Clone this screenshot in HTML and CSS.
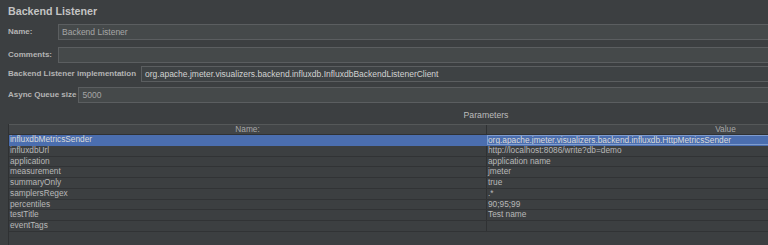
FILE: index.html
```html
<!DOCTYPE html>
<html>
<head>
<meta charset="utf-8">
<link rel="stylesheet" href="styles.css">
</head>
<body>
<div class="panel">
  <h1 class="title">Backend Listener</h1>
  <div class="form">
    <span class="lbl">Name:</span><div class="field dim">Backend Listener</div>
    <span class="lbl">Comments:</span><div class="field"></div>
  </div>
  <div class="row impl">
    <span class="lbl">Backend Listener implementation</span>
    <div class="field combo">org.apache.jmeter.visualizers.backend.influxdb.InfluxdbBackendListenerClient</div>
  </div>
  <div class="row queue">
    <span class="lbl">Async Queue size</span>
    <div class="field dim">5000</div>
  </div>
  <div class="params-title">Parameters</div>
  <div class="table">
    <div class="thead"><div class="th name">Name:</div><div class="th">Value</div></div>
    <div class="tr selected"><div class="td name">influxdbMetricsSender</div><div class="td val focus">org.apache.jmeter.visualizers.backend.influxdb.HttpMetricsSender</div></div>
    <div class="tr"><div class="td name">influxdbUrl</div><div class="td val">http://localhost:8086/write?db=demo</div></div>
    <div class="tr"><div class="td name">application</div><div class="td val">application name</div></div>
    <div class="tr"><div class="td name">measurement</div><div class="td val">jmeter</div></div>
    <div class="tr"><div class="td name">summaryOnly</div><div class="td val">true</div></div>
    <div class="tr"><div class="td name">samplersRegex</div><div class="td val">.*</div></div>
    <div class="tr"><div class="td name">percentiles</div><div class="td val">90;95;99</div></div>
    <div class="tr"><div class="td name">testTitle</div><div class="td val">Test name</div></div>
    <div class="tr"><div class="td name">eventTags</div><div class="td val"></div></div>
  </div>
</div>
</body>
</html>
```
FILE: styles.css
```css
* { box-sizing: border-box; }
html, body {
  margin: 0;
  padding: 0;
  background: #3c3f41;
  overflow: hidden;
  width: 768px;
  height: 245px;
}
.panel {
  width: 972px;
  padding: 4px 8px 0 8px;
  font-family: "Liberation Sans", Arial, sans-serif;
  color: #bbbbbb;
}
.title {
  margin: 0;
  font-size: 10.7px;
  line-height: 14px;
  font-weight: bold;
  color: #c4c4c4;
}
.lbl {
  font-size: 8px;
  font-weight: bold;
  line-height: 16px;
  color: #b4b4b4;
  white-space: nowrap;
}
.form {
  margin-top: 6px;
  display: grid;
  grid-template-columns: 50px 1fr;
  row-gap: 7px;
}
.field {
  height: 16px;
  border: 1px solid #5b5e60;
  background: #45494a;
  font-size: 8.5px;
  line-height: 14px;
  padding-left: 3px;
  color: #a6a6a6;
  white-space: nowrap;
  overflow: hidden;
}
.row {
  display: flex;
  align-items: center;
}
.row .field { flex: 1; }
.impl { margin-top: 3px; gap: 5px; }
.impl .field.combo {
  background: #3e4244;
  color: #d2d2d2;
  padding-left: 3px;
}
.queue { margin-top: 5px; gap: 2px; }
.params-title {
  margin-top: 6px;
  text-align: center;
  font-size: 8.7px;
  line-height: 12px;
  color: #bdbdbd;
}
.table {
  margin-top: 3px;
  border-left: 1px solid #2f3133;
  height: 140px;
}
.thead {
  display: grid;
  grid-template-columns: 478px 1fr;
  height: 11px;
  border-top: 1px solid #555859;
  border-bottom: 1px solid #2f3133;
  background: #424547;
  font-size: 8.3px;
  line-height: 9px;
  color: #a8a8a8;
}
.th { text-align: center; }
.th.name { border-right: 1px solid #2f3133; }
.tr {
  display: grid;
  grid-template-columns: 478px 1fr;
  height: 10.75px;
  border-bottom: 1px solid #313335;
  font-size: 8.3px;
  line-height: 9.75px;
  color: #b8b8b8;
}
.td { white-space: nowrap; overflow: hidden; padding-left: 1px; }
.td.name { border-right: 1px solid #2f3133; }
.td.val { padding-left: 1px; }
.tr.selected { background: #4b6eaf; color: #dadada; border-bottom-color: #4b6eaf; }
.tr.selected .td.name { border-right-color: #4b6eaf; }
.td.focus { border: 1px solid #7e9ccf; line-height: 8.75px; padding-left: 0; }
```
